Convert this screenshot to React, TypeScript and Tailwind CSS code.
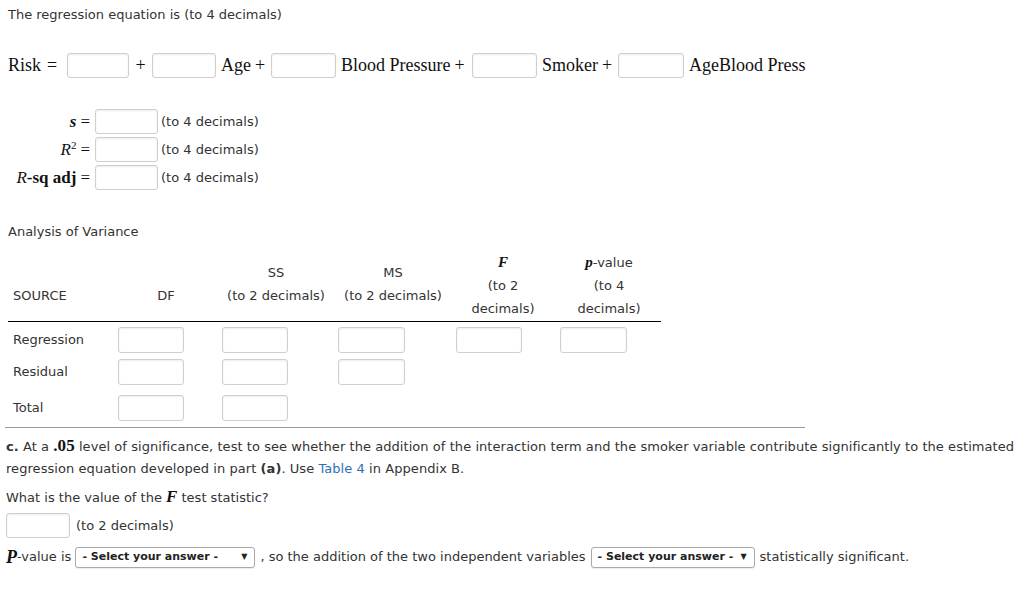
import React from "react";

const SANS = "font-['DejaVu_Sans',Verdana,sans-serif]";
const MATH = "font-['Liberation_Serif','Times_New_Roman',serif]";

// Small text box used everywhere in the problem
function Box({ w = "w-[64px]", h = "h-[25px]", className = "" }: { w?: string; h?: string; className?: string }) {
    return (
        <input
            type="text"
            className={`${w} ${h} shrink-0 rounded-[3px] border border-[#cfcfcf] bg-white shadow-[inset_0_1px_2px_rgba(0,0,0,0.08)] outline-none ${className}`}
        />
    );
}

function Select({ w }: { w: string }) {
    return (
        <div className={`${w} h-[21px] flex items-center justify-between rounded-[3px] border border-[#a9a9a9] bg-white pl-[6px] pr-[7px] text-[11px] font-bold text-[#222] shadow-[0_1px_1px_rgba(0,0,0,0.08)]`}>
            <span>- Select your answer -</span>
            <span className="text-[8px]">▼</span>
        </div>
    );
}

export default function App() {
    const headerLine = "h-[23px] leading-[23px]";
    const cols = "grid grid-cols-[102px_112px_108px_126px_94px_111px] items-center";

    return (
        <div className={`${SANS} w-[1024px] h-[596px] bg-white text-[13px] text-[#333] overflow-hidden`}>
            {/* Regression equation */}
            <div className="pl-[8px] pt-[7px] leading-[16px]">The regression equation is (to 4 decimals)</div>

            <div className={`${MATH} mt-[30px] pl-[8px] flex items-center h-[25px] text-[18px] text-[#111]`}>
                <span className="w-[59px]">Risk<span className="ml-[6px]">=</span></span>
                <Box w="w-[62px]" />
                <span className="w-[23px] text-center">+</span>
                <Box />
                <span className="w-[55px] pl-[5px]">Age<span className="ml-[4px]">+</span></span>
                <Box w="w-[65px]" />
                <span className="w-[136px] pl-[5px]">Blood Pressure<span className="ml-[4px]">+</span></span>
                <Box w="w-[65px]" />
                <span className="w-[81px] pl-[5px]">Smoker<span className="ml-[4px]">+</span></span>
                <Box w="w-[66px]" />
                <span className="pl-[5px]">AgeBlood Press</span>
            </div>

            {/* Fit statistics */}
            <div className="mt-[31px] pl-[8px] flex flex-col gap-[3px]">
                {[
                    <><i className="font-bold">s</i></>,
                    <><i>R</i><sup className="text-[11px]">2</sup></>,
                    <><i>R</i><span className="font-semibold">-sq adj</span></>,
                ].map((label, i) => (
                    <div key={i} className="flex items-center h-[25px]">
                        <div className={`${MATH} w-[82px] whitespace-nowrap text-right text-[17px] text-[#111]`}>
                            {label}
                            <span className="ml-[4px]">=</span>
                        </div>
                        <Box w="w-[63px]" className="ml-[5px]" />
                        <span className="ml-[3px]">(to 4 decimals)</span>
                    </div>
                ))}
            </div>

            {/* ANOVA */}
            <div className="pl-[8px] mt-[34px] leading-[16px]">Analysis of Variance</div>

            <div className="mt-[11px] ml-[8px] w-[653px]">
                <div className="grid grid-cols-[102px_112px_108px_126px_94px_111px] items-end h-[71px] border-b border-black">
                    <div className="pl-[5px] mb-[17px] leading-[23px]">SOURCE</div>
                    <div className="text-center mb-[17px] leading-[23px]">DF</div>
                    <div className="text-center mb-[17px]">
                        <div className={headerLine}>SS</div>
                        <div className={headerLine}>(to 2 decimals)</div>
                    </div>
                    <div className="text-center mb-[17px]">
                        <div className={headerLine}>MS</div>
                        <div className={headerLine}>(to 2 decimals)</div>
                    </div>
                    <div className="text-center mb-[4px]">
                        <div className={`${headerLine} ${MATH} text-[15px] font-bold italic text-[#111]`}>F</div>
                        <div className={headerLine}>(to 2</div>
                        <div className={headerLine}>decimals)</div>
                    </div>
                    <div className="text-center mb-[4px] pl-[7px]">
                        <div className={headerLine}>
                            <i className={`${MATH} text-[15px] font-bold text-[#111]`}>p</i>-value
                        </div>
                        <div className={headerLine}>(to 4</div>
                        <div className={headerLine}>decimals)</div>
                    </div>
                </div>

                <div className={`${cols} pt-[5px]`}>
                    <div className="pl-[5px]">Regression</div>
                    <div className="pl-[8px]"><Box w="w-[66px]" h="h-[26px]" /></div>
                    <div><Box w="w-[66px]" h="h-[26px]" /></div>
                    <div className="pl-[8px]"><Box w="w-[67px]" h="h-[26px]" /></div>
                    <div><Box w="w-[66px]" h="h-[26px]" /></div>
                    <div className="pl-[10px]"><Box w="w-[67px]" h="h-[26px]" /></div>
                </div>
                <div className={`${cols} pt-[6px]`}>
                    <div className="pl-[5px]">Residual</div>
                    <div className="pl-[8px]"><Box w="w-[66px]" h="h-[26px]" /></div>
                    <div><Box w="w-[66px]" h="h-[26px]" /></div>
                    <div className="pl-[8px]"><Box w="w-[67px]" h="h-[26px]" /></div>
                </div>
                <div className={`${cols} pt-[10px]`}>
                    <div className="pl-[5px]">Total</div>
                    <div className="pl-[8px]"><Box w="w-[66px]" h="h-[26px]" /></div>
                    <div><Box w="w-[66px]" h="h-[26px]" /></div>
                </div>
            </div>
            <div className="mt-[6px] ml-[5px] w-[800px] border-b border-[#9a9a9a]" />

            {/* Part c */}
            <div className="pl-[6px] pt-[7px] leading-[22px]">
                <div className="whitespace-nowrap tracking-[0.06px]">
                    <b>c.</b> At a <b className={`${MATH} text-[17px] text-[#111]`}>.05</b> level of significance, test to see whether the addition of the interaction term and the smoker variable contribute significantly to the estimated
                </div>
                <div className="whitespace-nowrap tracking-[0.06px]">
                    regression equation developed in part <b>(a)</b>. Use <span className="text-[#2f6fb3]">Table 4</span> in Appendix B.
                </div>
                <div className="mt-[6px]">
                    What is the value of the <i className={`${MATH} text-[17px] font-bold text-[#111]`}>F</i> test statistic?
                </div>
                <div className="mt-[4px] flex items-center">
                    <Box w="w-[64px]" />
                    <span className="ml-[6px]">(to 2 decimals)</span>
                </div>
                <div className="mt-[8px] flex items-center h-[22px]">
                    <i className={`${MATH} text-[18px] font-bold text-[#111]`}>P</i>
                    <span>-value is</span>
                    <div className="ml-[4px]"><Select w="w-[180px]" /></div>
                    <span className="ml-[5px]">, so the addition of the two independent variables</span>
                    <div className="ml-[5px]"><Select w="w-[164px]" /></div>
                    <span className="ml-[5px]">statistically significant.</span>
                </div>
            </div>
        </div>
    );
}
